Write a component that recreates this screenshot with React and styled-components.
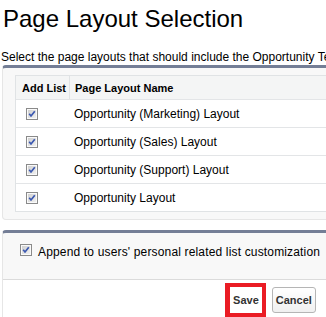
import React from "react";
import styled, { createGlobalStyle } from "styled-components";

const GlobalStyle = createGlobalStyle`
  html, body { margin: 0; padding: 0; background: #fff; overflow: hidden; }
  body { font-family: "Liberation Sans", Arial, sans-serif; color: #000; }
`;

const Page = styled.div`
  width: 540px;
`;

const Title = styled.h1`
  margin: 5px 0 0 3px;
  font-size: 24px;
  font-weight: normal;
  line-height: 28px;
  color: #000;
`;

const Intro = styled.p`
  margin: 17px 0 0 1px;
  font-size: 12px;
  line-height: 14px;
  white-space: nowrap;
  color: #000;
`;

const Panel = styled.div`
  margin: ${(p) => p.$mt}px 0 0 2px;
  width: 537px;
  box-sizing: border-box;
  background: #f8f8f8;
  border: 1px solid #e6e6e6;
  border-top: 3px solid #747e96;
  border-radius: 4px;
  padding: ${(p) => p.$pad};
  overflow: hidden;
`;

const Table = styled.div`
  border: 1px solid #e0e3e5;
  background: #fff;
`;

const Row = styled.div`
  display: grid;
  grid-template-columns: 54px 1fr;
  height: ${(p) => (p.$head ? 23 : 27)}px;
  border-bottom: 1px solid #e3e5e7;
  background: ${(p) => (p.$head ? "#f4f5f5" : "#fff")};
  &:last-child { border-bottom: none; height: 27px; }
`;

const HeadCell = styled.div`
  display: flex;
  align-items: center;
  padding-left: ${(p) => p.$pl}px;
  font-size: 11px;
  font-weight: bold;
  color: #000;
  border-right: ${(p) => (p.$divider ? "1px solid #e0e3e5" : "none")};
`;

const Cell = styled.div`
  display: flex;
  align-items: center;
  padding-left: ${(p) => p.$pl}px;
  font-size: 12px;
  color: #000;
`;

const CheckRow = styled.div`
  display: flex;
  align-items: flex-start;
  height: 46px;
  box-sizing: border-box;
  padding: 11px 0 0 17px;
`;

const Label = styled.span`
  margin: 1px 0 0 6px;
  font-size: 12px;
  line-height: 14px;
  letter-spacing: 0.16px;
  white-space: nowrap;
  color: #000;
`;

const ButtonBar = styled.div`
  display: flex;
  justify-content: center;
  align-items: flex-start;
  gap: 6px;
  background: #fff;
  border-top: 1px solid #dbdbdb;
  padding: 3px 0 10px;
`;

const Highlight = styled.div`
  border: 4px solid #ea1c24;
  border-left-width: 5px;
  display: flex;
  background: #fff;
`;

const Button = styled.button`
  font-family: "Liberation Sans", Arial, sans-serif;
  font-size: 11px;
  font-weight: bold;
  color: #333;
  height: 26px;
  padding: 0 3px;
  margin-top: ${(p) => p.$mt || 0}px;
  border: ${(p) => (p.$plain ? "none" : "1px solid #b5b5b5")};
  border-radius: 3px;
  background: ${(p) => (p.$plain ? "#fff" : "linear-gradient(#ffffff, #f0f0f0)")};
  cursor: pointer;
`;

const Box = styled.svg`
  display: block;
  flex: none;
`;

function Checkbox() {
  return (
    <Box width="12" height="12" viewBox="0 0 12 12">
      <defs>
        <linearGradient id="cbg" x1="0" y1="0" x2="1" y2="1">
          <stop offset="0" stopColor="#d0d0d0" />
          <stop offset="1" stopColor="#f0f0f0" />
        </linearGradient>
      </defs>
      <rect x="0.5" y="0.5" width="11" height="11" fill="#fafafa" stroke="#8a8a8a" />
      <rect x="2" y="2" width="8" height="8" fill="url(#cbg)" />
      <path d="M3.2 5.8 L5 8 L8.8 3.2" stroke="#3b58b0" strokeWidth="1.7" fill="none" />
    </Box>
  );
}

const layouts = [
  "Opportunity (Marketing) Layout",
  "Opportunity (Sales) Layout",
  "Opportunity (Support) Layout",
  "Opportunity Layout",
];

export default function App() {
  return (
    <Page>
      <GlobalStyle />
      <Title>Page Layout Selection</Title>
      <Intro>Select the page layouts that should include the Opportunity Team related list.</Intro>
      <Panel $mt={1} $pad="7px 12px 7px 12px">
        <Table>
          <Row $head>
            <HeadCell $pl={6} $divider>Add List</HeadCell>
            <HeadCell $pl={5}>Page Layout Name</HeadCell>
          </Row>
          {layouts.map((name) => (
            <Row key={name}>
              <Cell $pl={10}>
                <Checkbox />
              </Cell>
              <Cell $pl={4}>{name}</Cell>
            </Row>
          ))}
        </Table>
      </Panel>
      <Panel $mt={10} $pad="0">
        <CheckRow>
          <Checkbox />
          <Label>Append to users' personal related list customization</Label>
        </CheckRow>
        <ButtonBar>
          <Highlight>
            <Button $plain>Save</Button>
          </Highlight>
          <Button $mt={4}>Cancel</Button>
        </ButtonBar>
      </Panel>
    </Page>
  );
}
